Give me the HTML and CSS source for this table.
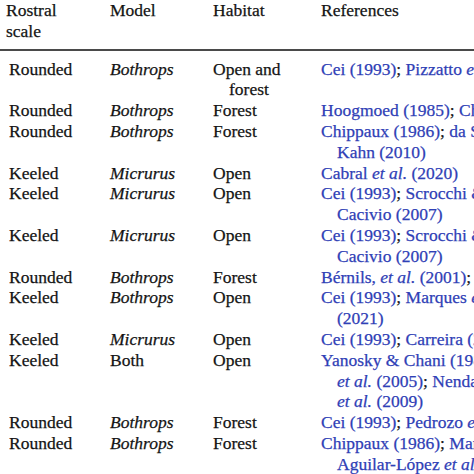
FILE: index.html
```html
<!DOCTYPE html>
<html>
<head>
<meta charset="utf-8">
<link rel="stylesheet" href="styles.css">
</head>
<body>
<table class="tbl">
  <colgroup>
    <col class="c1"><col class="c2"><col class="c3"><col class="c4">
  </colgroup>
  <thead>
    <tr>
      <th class="h1">Rostral<br>scale</th>
      <th>Model</th>
      <th>Habitat</th>
      <th>References</th>
    </tr>
  </thead>
  <tbody>
    <tr class="first">
      <td class="d1">Rounded</td><td><i>Bothrops</i></td><td class="hang">Open and<br>forest</td>
      <td class="ref"><a>Cei (1993)</a>; <a>Pizzatto <i>et al.</i> (2007)</a></td>
    </tr>
    <tr>
      <td class="d1">Rounded</td><td><i>Bothrops</i></td><td class="hang">Forest</td>
      <td class="ref"><a>Hoogmoed (1985)</a>; <a>Chippaux (1986)</a></td>
    </tr>
    <tr>
      <td class="d1">Rounded</td><td><i>Bothrops</i></td><td class="hang">Forest</td>
      <td class="ref"><a>Chippaux (1986)</a>; <a>da Silva &amp; Sites</a><br><a>Kahn (2010)</a></td>
    </tr>
    <tr>
      <td class="d1">Keeled</td><td><i>Micrurus</i></td><td class="hang">Open</td>
      <td class="ref"><a>Cabral <i>et al.</i> (2020)</a></td>
    </tr>
    <tr>
      <td class="d1">Keeled</td><td><i>Micrurus</i></td><td class="hang">Open</td>
      <td class="ref"><a>Cei (1993)</a>; <a>Scrocchi &amp;</a><br><a>Cacivio (2007)</a></td>
    </tr>
    <tr>
      <td class="d1">Keeled</td><td><i>Micrurus</i></td><td class="hang">Open</td>
      <td class="ref"><a>Cei (1993)</a>; <a>Scrocchi &amp;</a><br><a>Cacivio (2007)</a></td>
    </tr>
    <tr>
      <td class="d1">Rounded</td><td><i>Bothrops</i></td><td class="hang">Forest</td>
      <td class="ref"><a>Bérnils, <i>et al.</i> (2001)</a>; <a>Marques</a></td>
    </tr>
    <tr>
      <td class="d1">Keeled</td><td><i>Bothrops</i></td><td class="hang">Open</td>
      <td class="ref"><a>Cei (1993)</a>; <a>Marques <i>et al.</i></a><br><a>(2021)</a></td>
    </tr>
    <tr>
      <td class="d1">Keeled</td><td><i>Micrurus</i></td><td class="hang">Open</td>
      <td class="ref"><a>Cei (1993)</a>; <a>Carreira (2002)</a></td>
    </tr>
    <tr>
      <td class="d1">Keeled</td><td>Both</td><td class="hang">Open</td>
      <td class="ref"><a>Yanosky &amp; Chani (1988)</a>; <a>Giraudo</a><br><a><i>et al.</i> (2005)</a>; <a>Nenda</a><br><a><i>et al.</i> (2009)</a></td>
    </tr>
    <tr>
      <td class="d1">Rounded</td><td><i>Bothrops</i></td><td class="hang">Forest</td>
      <td class="ref"><a>Cei (1993)</a>; <a>Pedrozo <i>et al.</i></a></td>
    </tr>
    <tr>
      <td class="d1">Rounded</td><td><i>Bothrops</i></td><td class="hang">Forest</td>
      <td class="ref"><a>Chippaux (1986)</a>; <a>Martins</a><br><a>Aguilar-López <i>et al.</i></a></td>
    </tr>
  </tbody>
</table>
</body>
</html>
```
FILE: styles.css
```css
html, body {
  margin: 0;
  padding: 0;
  background: #fff;
  overflow: hidden;
}
body {
  width: 474px;
  height: 474px;
}
.tbl {
  border-collapse: collapse;
  table-layout: fixed;
  width: 640px;
  font-family: "Liberation Serif", "DejaVu Serif", serif;
  font-size: 17.5px;
  line-height: 20.8px;
  color: #141414;
  -webkit-text-stroke: 0.25px currentColor;
}
.c1 { width: 110px; }
.c2 { width: 103px; }
.c3 { width: 108px; }
.c4 { width: 319px; }
th {
  font-weight: normal;
  text-align: left;
  vertical-align: top;
  padding: 0 0 7px 0;
  border-bottom: 2px solid #4a4a4a;
}
th.h1 { padding-left: 6px; }
td {
  vertical-align: top;
  padding: 0;
  white-space: nowrap;
}
tr.first td { padding-top: 8px; }
td.d1 { padding-left: 9px; }
td.hang, td.ref {
  padding-left: 16px;
  text-indent: -16px;
}
.ref a {
  color: #2f40b6;
  text-decoration: none;
}
```
